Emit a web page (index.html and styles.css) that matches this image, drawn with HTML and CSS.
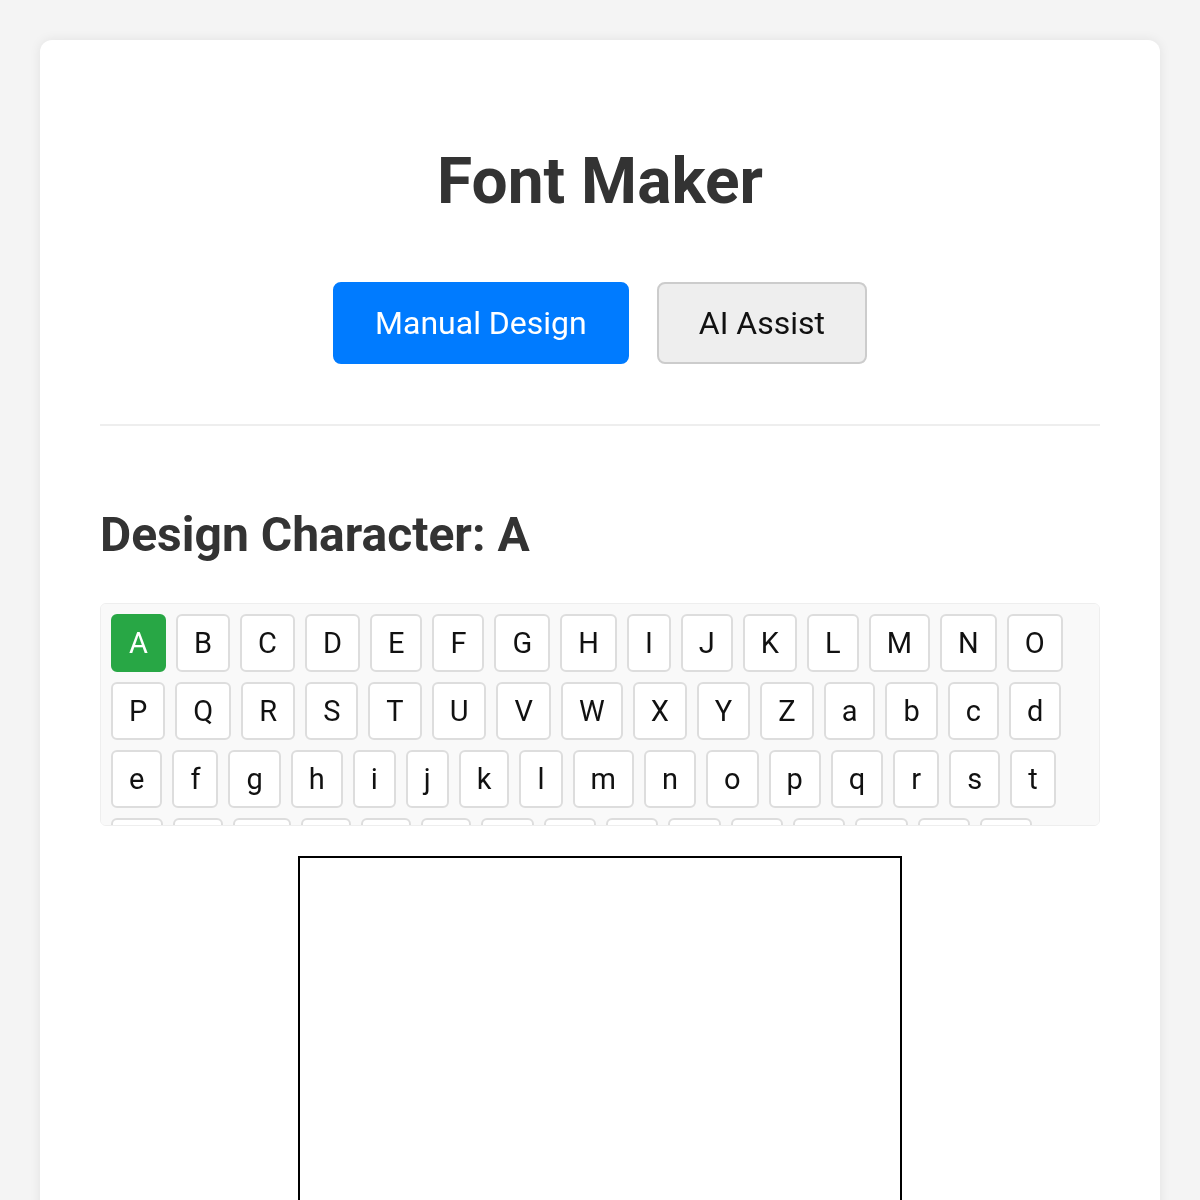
FILE: index.html
```html
<!DOCTYPE html>
<html lang="en">
<head>
  <meta charset="UTF-8" />
  <meta name="viewport" content="width=device-width, initial-scale=1.0"/>
  <title>Font Maker</title>
  <link rel="stylesheet" href="styles.css">
</head>
<body>
  <div class="container">
    <h1>Font Maker</h1>

    <div class="mode-switch">
      <button class="mode-btn active">Manual Design</button>
      <button class="mode-btn">AI Assist</button>
    </div>

    <hr class="divider">

    <h2>Design Character: <span id="current">A</span></h2>

    <div class="char-grid" id="charGrid"></div>

    <canvas id="drawCanvas" width="600" height="600"></canvas>
  </div>

  <script>
    const chars = 'ABCDEFGHIJKLMNOPQRSTUVWXYZabcdefghijklmnopqrstuvwxyz0123456789!?.,';
    const grid = document.getElementById('charGrid');

    for (const ch of chars) {
      const btn = document.createElement('button');
      btn.className = 'char-btn' + (ch === 'A' ? ' active' : '');
      btn.textContent = ch;
      btn.onclick = () => pilih(ch, btn);
      grid.appendChild(btn);
    }

    function pilih(ch, btn) {
      document.querySelectorAll('.char-btn').forEach(b => b.classList.remove('active'));
      btn.classList.add('active');
      document.getElementById('current').textContent = ch;
    }
  </script>
</body>
</html>
```

FILE: styles.css
```css
body {
  margin: 0;
  padding: 40px;
  background: #f4f4f4;
  font-family: Roboto, "Liberation Sans", sans-serif;
  color: #333;
}

.container {
  background: white;
  border-radius: 12px;
  padding: 60px;
  box-shadow: 0 0 12px rgba(0, 0, 0, 0.08);
}

h1 {
  text-align: center;
  font-size: 64px;
  margin: 44px 0 63px;
}

.mode-switch {
  display: flex;
  justify-content: center;
  gap: 28px;
}

.mode-btn {
  font-family: inherit;
  font-size: 32px;
  padding: 20px 40px;
  border: 2px solid #ccc;
  border-radius: 8px;
  background: #eee;
  color: #111;
  cursor: pointer;
}

.mode-btn.active {
  background: #007bff;
  border-color: #007bff;
  color: white;
}

.divider {
  border: none;
  border-top: 2px solid #eee;
  margin: 60px 0 0;
}

h2 {
  font-size: 48px;
  margin: 80px 0 40px;
}

/* daftar karakter, bisa discroll */
.char-grid {
  display: flex;
  flex-wrap: wrap;
  gap: 10px;
  padding: 10px;
  max-height: 201px;
  overflow-y: auto;
  scrollbar-width: none;
  background: #f9f9f9;
  border: 1px solid #eee;
  border-radius: 6px;
}

.char-btn {
  font-family: inherit;
  font-size: 29px;
  padding: 10px 16px;
  min-width: 40px;
  background: white;
  color: #111;
  border: 2px solid #ddd;
  border-radius: 6px;
  cursor: pointer;
}

.char-btn.active {
  background: #28a745;
  border-color: #28a745;
  color: white;
}

canvas {
  display: block;
  margin: 30px auto 0;
  border: 2px solid black;
  background: white;
}
```
